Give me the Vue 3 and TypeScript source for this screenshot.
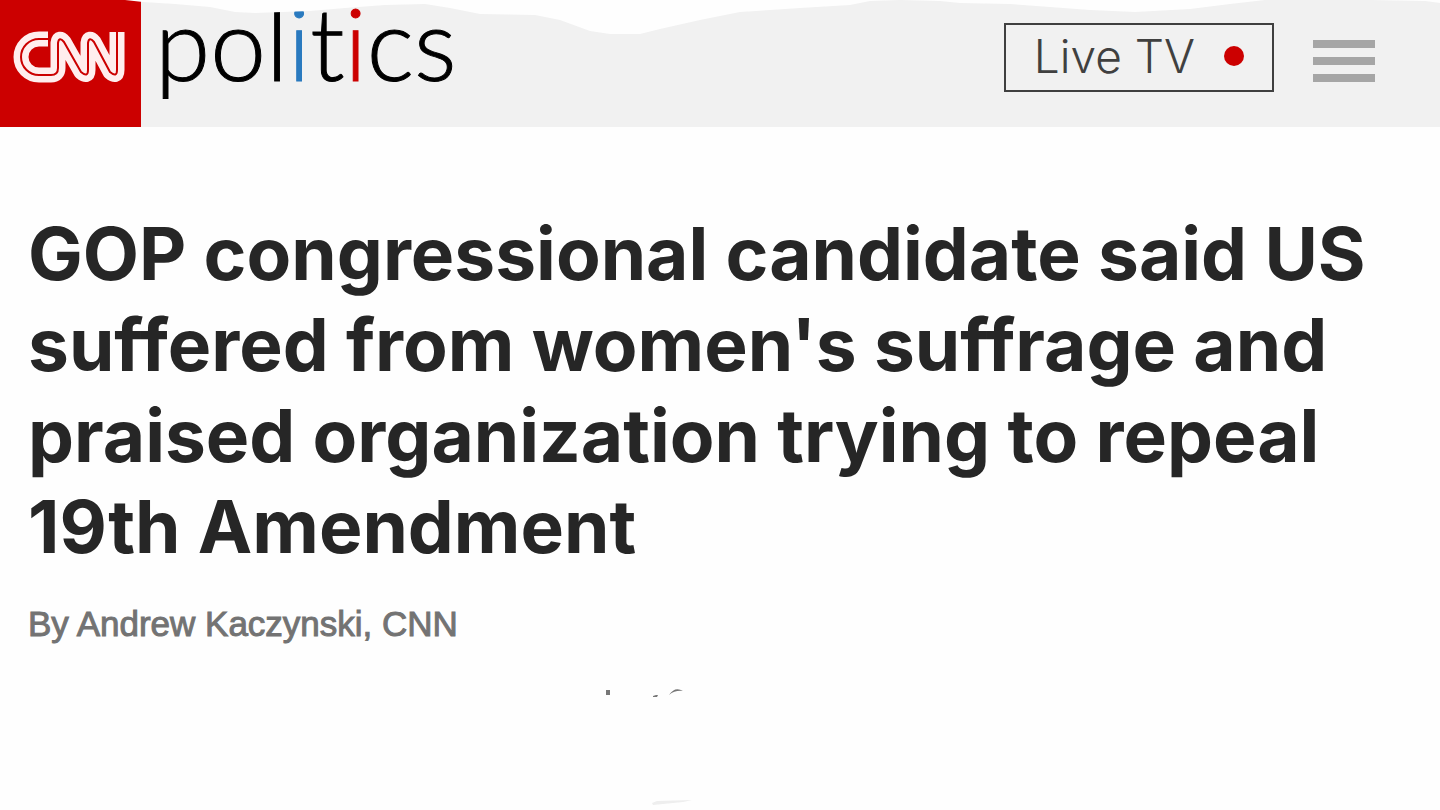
<script setup lang="ts">
const headline = "GOP congressional candidate said US suffered from women's suffrage and praised organization trying to repeal 19th Amendment"
</script>

<template>
  <div class="page">
    <header class="bar">
      <a class="brand" href="#" aria-label="CNN home">
        <svg viewBox="0 0 141 127" aria-hidden="true">
          <g fill="none" stroke-linejoin="round">
            <path class="tube" d="M48 39H39A17.5 17.5 0 0 0 39 75H51Q58 75 58 68V43Q59 36 64 42L81 72Q88 78 88 70V43Q89 36 94 42L110 72Q117 78 117 70V32" />
            <path class="core" d="M48 39H39A17.5 17.5 0 0 0 39 75H51Q58 75 58 68V43Q59 36 64 42L81 72Q88 78 88 70V43Q89 36 94 42L110 72Q117 78 117 70V32" />
          </g>
        </svg>
      </a>
      <a class="section" href="#">pol<span class="blue">i</span>t<span class="red">i</span>cs</a>
      <button class="live" type="button">Live TV<span class="dot"></span></button>
      <button class="menu" type="button" aria-label="Menu"><i></i><i></i><i></i></button>
      <svg class="edge" viewBox="0 0 1440 40" preserveAspectRatio="none" aria-hidden="true">
        <path d="M125 0L143 2L175 4L210 7L235 12L255 13L282 12L310 11L345 8L385 5L425 4L450 8L480 14L535 15L560 20L590 31L610 34L640 34L660 29L700 20L740 12L800 8L850 5L870 1L900 0L940 1L960 3L1010 4L1050 7L1090 10L1135 12L1190 9L1230 4L1265 0L1370 0L1425 1L1440 3V0Z" />
      </svg>
    </header>
    <main class="article">
      <h1>{{ headline }}</h1>
      <p class="byline">By Andrew Kaczynski, CNN</p>
      <svg class="marks" viewBox="0 0 140 140" aria-hidden="true">
        <path fill="#777" d="M26 20h4v5h-4zM73 26l3-1h2l-1 2h-4zM89 25q6-9 14-4q-8-1-14 4z" />
        <path fill="#eee" d="M72 133l5-2 35-1-9 2-30 3z" />
      </svg>
    </main>
  </div>
</template>

<style>
body { margin: 0; background: #fefefe; }
</style>

<style scoped>
.page { font-family: "Liberation Sans", Arial, sans-serif; color: #262626; }
.bar { position: relative; display: flex; align-items: flex-start; height: 127px; background: #f1f1f1; }
.brand { width: 141px; height: 127px; background: #c00; }
.brand svg { display: block; }
.tube { stroke: #fee; stroke-width: 15; }
.core { stroke: #c00; stroke-width: 2; }
.section { margin-left: 14px; font: 300 100px/84px Lato, sans-serif; font-variant-ligatures: none; color: #000; text-decoration: none; -webkit-text-stroke: 1px currentColor; }
.blue { color: #2a7abf; }
.red { color: #c00; }
.live { display: flex; align-items: center; gap: 29px; box-sizing: border-box; height: 69px; margin: 23px 0 0 auto; padding: 0 28px 4px; border: 2px solid #404040; background: none; color: #404040; font: 300 46px/60px Inter, sans-serif; }
.dot { width: 20px; height: 20px; border-radius: 50%; background: #c00; }
.menu { display: flex; flex-direction: column; gap: 9px; width: 62px; margin: 40px 65px 0 39px; padding: 0; border: 0; background: none; }
.menu i { height: 8px; background: #a6a6a6; }
.edge { position: absolute; top: 0; left: 0; width: 100%; height: 40px; fill: #fefefe; pointer-events: none; }
.article { padding: 81px 28px 0; }
h1 { margin: 0; font: 700 73px/91px Inter, "Liberation Sans", sans-serif; }
.byline { margin: 32px 0 0; font-size: 35px; line-height: 40px; color: #737373; -webkit-text-stroke: 1px #737373; }
.marks { display: block; width: 140px; height: 140px; margin: 26px 0 0 552px; }
</style>
